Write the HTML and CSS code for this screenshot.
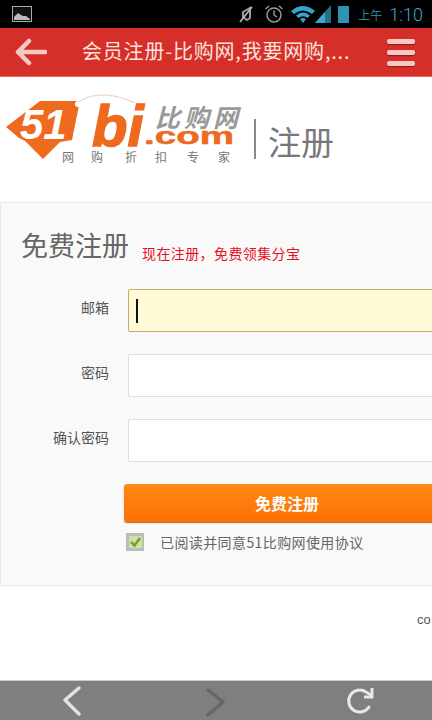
FILE: index.html
```html
<!DOCTYPE html>
<html lang="zh">
<head>
  <meta charset="UTF-8">
  <meta name="viewport" content="width=device-width, initial-scale=1.0">
  <title>会员注册</title>
  <link rel="stylesheet" href="styles.css">
</head>
<body>
  <div class="status-bar">
    <svg class="pic-icon" width="20" height="16" viewBox="0 0 20 16">
      <rect x="0.5" y="0.5" width="19" height="15" fill="#111" stroke="#aaa"/>
      <path d="M2 14V11L6 7L9 9L11 10L14 10L18 13V14Z" fill="#bbb"/>
    </svg>
    <div class="status-right">
      <svg class="mute" width="18" height="20" viewBox="0 0 18 20">
        <path d="M6 13L6 8L13 4V14L10 16Z" fill="none" stroke="#999" stroke-width="2"/>
        <path d="M3 18L15 3" stroke="#bbb" stroke-width="1.6"/>
      </svg>
      <svg class="alarm" width="20" height="20" viewBox="0 0 20 20">
        <circle cx="10" cy="11" r="7" fill="none" stroke="#999" stroke-width="1.5"/>
        <path d="M10 6.500V11L13 13M1.500 5L5 2M18.500 5L15 2" fill="none" stroke="#999" stroke-width="1.4"/>
      </svg>
      <svg class="wifi" width="24" height="18" viewBox="0 0 24 18">
        <path d="M0 6Q12 -4 24 6L21 9Q12 2 3 9Z" fill="#35a4c8"/>
        <path d="M5 10.500Q12 4.500 19 10.500L16.500 13Q12 9.500 7.500 13Z" fill="#35a4c8"/>
        <path d="M9 14Q12 12 15 14L12 18Z" fill="#35a4c8"/>
      </svg>
      <svg class="signal" width="16" height="18" viewBox="0 0 16 18">
        <path d="M0 18L16 0V18Z" fill="#246f8a"/>
        <path d="M0 18L10 7V18Z" fill="#3aa7cc"/>
      </svg>
      <div class="battery"></div>
      <span class="ampm">上午</span>
      <span class="clock">1:10</span>
    </div>
  </div>

  <header class="top-bar">
    <svg class="back" width="32" height="28" viewBox="0 0 32 28">
      <path d="M14 3L3 14L14 25M3 14H30" fill="none" stroke="#f6c9c4" stroke-width="4.500" stroke-linecap="round" stroke-linejoin="round"/>
    </svg>
    <h1>会员注册-比购网,我要网购,...</h1>
    <div class="menu"><i></i><i></i><i></i></div>
  </header>

  <div class="brand">
    <svg class="logo" width="240" height="78" viewBox="0 0 240 78">
      <path d="M75 7Q97 -6 130 9" fill="none" stroke="#eeccb8" stroke-width="1"/>
      <path d="M1 33L35 7H75L71 26L67 46L55 48L38 65L20 47L14 44Z" fill="#ee6a1f"/>
      <circle cx="73" cy="10" r="3" fill="#fff"/>
      <text class="logo-51" x="15" y="45">51</text>
      <text class="logo-bi" x="87" y="52">bi</text>
      <text class="logo-cn" x="150" y="33" textLength="83">比购网</text>
      <text class="logo-com" x="139" y="50" textLength="90" lengthAdjust="spacingAndGlyphs">.com</text>
      <text class="logo-sub" x="57" y="68">网</text>
      <text class="logo-sub" x="86" y="68">购</text>
      <text class="logo-sub" x="120" y="68">折</text>
      <text class="logo-sub" x="150" y="68">扣</text>
      <text class="logo-sub" x="182" y="68">专</text>
      <text class="logo-sub" x="213" y="68">家</text>
    </svg>
    <div class="brand-title">注册</div>
  </div>

  <section class="card">
    <div class="card-head">
      <h2>免费注册</h2>
      <span class="hint">现在注册，免费领集分宝</span>
    </div>
    <div class="row">
      <label>邮箱</label>
      <div class="field focused"><span class="caret"></span></div>
    </div>
    <div class="row">
      <label>密码</label>
      <div class="field"></div>
    </div>
    <div class="row">
      <label>确认密码</label>
      <div class="field"></div>
    </div>
    <button class="submit">免费注册</button>
    <div class="agree">
      <span class="check">
        <svg width="13" height="12" viewBox="0 0 13 12">
          <rect width="13" height="12" fill="#cfe3a8"/>
          <path d="M2 6L5.500 9.500L11 2" fill="none" stroke="#6fa52a" stroke-width="2.500"/>
        </svg>
      </span>
      <span>已阅读并同意51比购网使用协议</span>
    </div>
  </section>

  <footer class="copy">co</footer>

  <nav class="bottom-bar">
    <svg width="26" height="32" viewBox="0 0 26 32">
      <path d="M19 3L5 15L19 29" fill="none" stroke="#e2e2e2" stroke-width="3.500" stroke-linecap="round" stroke-linejoin="round"/>
    </svg>
    <svg width="26" height="32" viewBox="0 0 26 32">
      <path d="M6 5L21 17L6 30" fill="none" stroke="#676767" stroke-width="3.500" stroke-linecap="round" stroke-linejoin="round"/>
    </svg>
    <svg width="32" height="32" viewBox="0 0 32 32">
      <path d="M25 22A11 11 0 1 1 22 7L27 10" fill="none" stroke="#e8e8e8" stroke-width="3" stroke-linecap="round"/>
      <path d="M20 12H28V3" fill="none" stroke="#e8e8e8" stroke-width="3"/>
    </svg>
  </nav>
</body>
</html>
```

FILE: styles.css
```css
html, body {
  margin: 0;
  padding: 0;
}

body {
  width: 432px;
  height: 720px;
  overflow: hidden;
  display: flex;
  flex-direction: column;
  background-color: #fff;
  font-family: "Noto Sans CJK SC", "Liberation Sans", sans-serif;
}

/* Status bar */
.status-bar {
  height: 28px;
  flex-shrink: 0;
  display: flex;
  justify-content: space-between;
  align-items: center;
  padding: 0 9px 0 12px;
  background-color: #000;
}

.status-right {
  display: flex;
  align-items: center;
}

.alarm { margin-left: 9px; }
.wifi { margin-left: 7px; }

.battery {
  width: 11px;
  height: 17px;
  margin-left: 7px;
  background-color: #2f93b5;
}

.ampm {
  margin-left: 9px;
  font-size: 12px;
  color: #2f7f9c;
}

.clock {
  margin-left: 7px;
  font-family: "Roboto", sans-serif;
  font-size: 18px;
  font-weight: 300;
  color: #3aa7cc;
}

/* Red title bar */
.top-bar {
  height: 49px;
  flex-shrink: 0;
  display: flex;
  align-items: center;
  padding: 0 17px 0 15px;
  background-color: #d62f29;
  border-bottom: 1px solid #ef6a5c;
  box-sizing: border-box;
}

.top-bar h1 {
  flex: 1;
  margin: 0 0 0 35px;
  padding-bottom: 3px;
  font-size: 20px;
  font-weight: 400;
  letter-spacing: 0.8px;
  color: #fbe3df;
  white-space: nowrap;
}

.menu {
  display: flex;
  flex-direction: column;
  gap: 6px;
}

.menu i {
  display: block;
  width: 28px;
  height: 5px;
  border-radius: 2px;
  background-color: #f6c9c4;
  box-shadow: 0 1px 1px #8f1c18;
}

/* Logo row */
.brand {
  height: 125px;
  flex-shrink: 0;
  display: flex;
  align-items: flex-start;
  padding: 17px 0 0 5px;
  box-sizing: border-box;
}

.logo text { font-family: "Liberation Sans", sans-serif; }

.logo .logo-51 {
  font-size: 42px;
  font-weight: 700;
  font-style: italic;
  fill: #fff;
}

.logo .logo-bi {
  font-size: 58px;
  font-weight: 700;
  font-style: italic;
  fill: #ee6a1f;
  stroke: #ee6a1f;
  stroke-width: 1.5px;
}

.logo .logo-com {
  font-size: 24px;
  font-weight: 700;
  fill: #ee6a1f;
  stroke: #ee6a1f;
  stroke-width: 0.5px;
}

.logo .logo-cn {
  font-family: "Noto Sans CJK SC", sans-serif;
  font-size: 25px;
  font-weight: 700;
  font-style: italic;
  fill: #999;
}

.logo .logo-sub {
  font-family: "Noto Sans CJK SC", sans-serif;
  font-size: 12px;
  fill: #777;
}

.brand-title {
  margin: 25px 0 0 9px;
  padding-left: 12px;
  border-left: 2px solid #888;
  height: 40px;
  line-height: 44px;
  font-size: 33px;
  color: #777;
}

/* Form card */
.card {
  width: 470px;
  height: 384px;
  flex-shrink: 0;
  box-sizing: border-box;
  padding: 0 0 0 20px;
  background-color: #f9f9f9;
  border: 1px solid #e8e8e8;
}

.card-head {
  height: 86px;
  display: flex;
  align-items: flex-start;
  padding-top: 22px;
  box-sizing: border-box;
}

.card-head h2 {
  margin: 0;
  font-size: 27px;
  line-height: 40px;
  font-weight: 400;
  color: #666;
}

.hint {
  margin: 18px 0 0 13px;
  font-size: 14px;
  line-height: 20px;
  letter-spacing: 0.4px;
  color: #e60f1e;
}

.row {
  display: flex;
  align-items: center;
  height: 43px;
  margin-bottom: 22px;
}

.row label {
  width: 88px;
  padding-bottom: 8px;
  text-align: right;
  font-size: 14px;
  color: #555;
}

.field {
  width: 340px;
  height: 43px;
  margin-left: 19px;
  box-sizing: border-box;
  display: flex;
  align-items: center;
  padding-left: 7px;
  background-color: #fff;
  border: 1px solid #ddd;
  border-radius: 2px;
}

.field.focused {
  background-color: #fffbd9;
  border: 1px solid #c9ab6c;
}

.caret {
  width: 2px;
  height: 24px;
  background-color: #111;
}

.submit {
  display: block;
  width: 326px;
  height: 38px;
  margin: 1px 0 0 103px;
  border: none;
  border-radius: 3px;
  background: linear-gradient(#ff8a14, #fb6f06);
  box-shadow: 0 1px 1px #c8640e;
  font-family: inherit;
  font-size: 16px;
  font-weight: 700;
  color: #fff;
}

.agree {
  display: flex;
  align-items: center;
  margin: 10px 0 0 105px;
  font-size: 14px;
  letter-spacing: 0.4px;
  color: #666;
}

.check {
  width: 18px;
  height: 18px;
  margin-right: 16px;
  display: flex;
  align-items: center;
  justify-content: center;
  background-color: #bbb;
}

.check svg { display: block; }

/* Cut-off footer text */
.copy {
  height: 94px;
  flex-shrink: 0;
  padding: 25px 0 0 417px;
  box-sizing: border-box;
  font-family: "Liberation Sans", sans-serif;
  font-size: 13px;
  line-height: 18px;
  color: #555;
  white-space: nowrap;
}

/* Browser toolbar */
.bottom-bar {
  flex: 1;
  display: flex;
  justify-content: space-between;
  align-items: center;
  padding: 0 56px 0 60px;
  background-color: #7f7f7f;
  border-top: 1px solid #ccc;
  overflow: hidden;
}

.bottom-bar svg { flex-shrink: 0; }
```
